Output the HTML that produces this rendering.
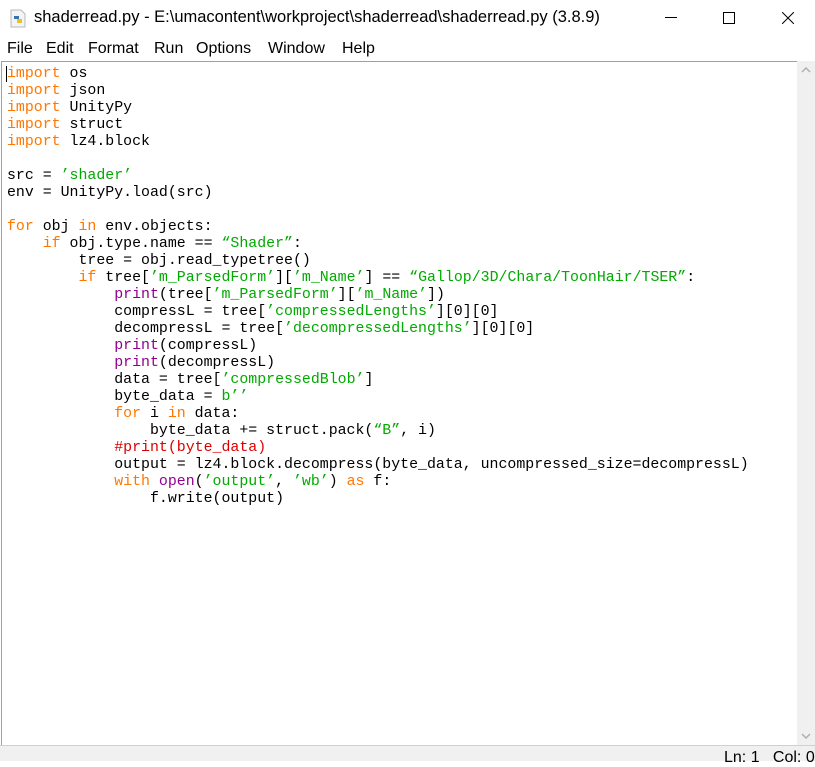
<!DOCTYPE html>
<html><head><meta charset="utf-8"><style>
body{margin:0;width:815px;height:760px;background:#fff;position:relative;overflow:hidden;font-family:"Liberation Sans","Noto Sans CJK SC",sans-serif}
#title{position:absolute;top:0;left:0;width:815px;height:36px;background:#fff}
#title .t{position:absolute;left:34px;top:8px;font-size:16.5px;color:#000}
#menu{position:absolute;top:36px;left:0;width:815px;height:26px;font-size:16px}
#menu span{position:absolute;top:4px}
#ed{position:absolute;left:1px;top:61px;width:795px;height:684px;border-top:1px solid #a0a0a0;border-left:1px solid #a0a0a0;background:#fff}
#sb{position:absolute;left:797px;top:61px;width:18px;height:684px;background:#f0f0f0}
#st{position:absolute;left:0;top:745px;width:815px;height:15px;background:#f0f0f0;border-top:1px solid #d0d0d0}
pre{position:absolute;left:7px;top:66px;margin:0;font-family:"Liberation Mono","Noto Sans CJK SC",monospace;font-size:14.9px;line-height:17px;color:#000}
.k{color:#ff7700}.s{color:#00aa00}.b{color:#900090}.c{color:#dd0000}
</style></head><body>
<div id="title">
<svg style="position:absolute;left:9px;top:9px" width="18" height="19" viewBox="0 0 18 19"><path d="M2 1h10l4 4v13H2z" fill="#f4f4f4" stroke="#b8b8b8"/><path d="M5 7h5v3H5z" fill="#3a72b0"/><path d="M8 10h5v4H8z" fill="#f0c020"/></svg>
<span class="t">shaderread.py - E:\umacontent\workproject\shaderread\shaderread.py (3.8.9)</span>
<svg style="position:absolute;left:665px;top:17px" width="12" height="2"><rect width="12" height="1" fill="#000"/></svg>
<svg style="position:absolute;left:723px;top:12px" width="12" height="12"><rect x="0.5" y="0.5" width="11" height="11" fill="none" stroke="#000"/></svg>
<svg style="position:absolute;left:782px;top:12px" width="12" height="12"><path d="M0 0L12 12M12 0L0 12" stroke="#000"/></svg>
</div>
<div id="menu"><span style="left:7px">File</span><span style="left:46px">Edit</span><span style="left:88px">Format</span><span style="left:154px">Run</span><span style="left:196px">Options</span><span style="left:268px">Window</span><span style="left:342px">Help</span></div>
<div id="ed"></div>
<div id="sb"><svg style="position:absolute;left:4px;top:6px" width="10" height="6"><path d="M1 5L5 1L9 5" stroke="#b0b0b0" fill="none" stroke-width="1.5"/></svg><svg style="position:absolute;left:4px;top:672px" width="10" height="6"><path d="M1 1L5 5L9 1" stroke="#b0b0b0" fill="none" stroke-width="1.5"/></svg></div>
<div id="st"><span style="position:absolute;left:724px;top:3px;font-size:16px">Ln: 1&nbsp;&nbsp;&nbsp;Col: 0</span></div>
<div style="position:absolute;left:6px;top:66px;width:1px;height:16px;background:#000"></div>
<pre><span class="k">import</span> os
<span class="k">import</span> json
<span class="k">import</span> UnityPy
<span class="k">import</span> struct
<span class="k">import</span> lz4.block

src = <span class="s">’shader’</span>
env = UnityPy.load(src)

<span class="k">for</span> obj <span class="k">in</span> env.objects:
    <span class="k">if</span> obj.type.name == <span class="s">“Shader”</span>:
        tree = obj.read_typetree()
        <span class="k">if</span> tree[<span class="s">’m_ParsedForm’</span>][<span class="s">’m_Name’</span>] == <span class="s">“Gallop/3D/Chara/ToonHair/TSER”</span>:
            <span class="b">print</span>(tree[<span class="s">’m_ParsedForm’</span>][<span class="s">’m_Name’</span>])
            compressL = tree[<span class="s">’compressedLengths’</span>][0][0]
            decompressL = tree[<span class="s">’decompressedLengths’</span>][0][0]
            <span class="b">print</span>(compressL)
            <span class="b">print</span>(decompressL)
            data = tree[<span class="s">’compressedBlob’</span>]
            byte_data = <span class="s">b’’</span>
            <span class="k">for</span> i <span class="k">in</span> data:
                byte_data += struct.pack(<span class="s">“B”</span>, i)
            <span class="c">#print(byte_data)</span>
            output = lz4.block.decompress(byte_data, uncompressed_size=decompressL)
            <span class="k">with</span> <span class="b">open</span>(<span class="s">’output’</span>, <span class="s">’wb’</span>) <span class="k">as</span> f:
                f.write(output)</pre>
</body></html>
